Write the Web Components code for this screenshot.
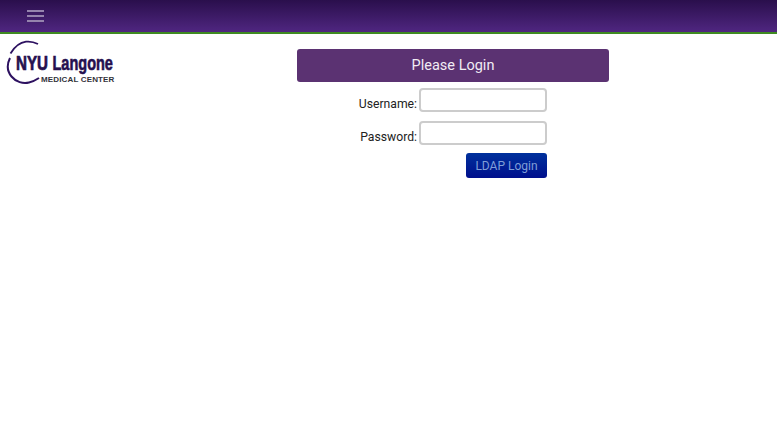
<!DOCTYPE html>
<html><head><meta charset="utf-8"><title>Login</title>
<style>html,body{margin:0;padding:0;background:#fff;height:100%;overflow:hidden}body{font-family:Roboto,sans-serif}</style>
</head><body>
<app-shell></app-shell>
<script>
class AppHeader extends HTMLElement{constructor(){super();this.attachShadow({mode:'open'}).innerHTML=`<style>
:host{display:flex;align-items:center;box-sizing:border-box;height:34px;padding:0 0 0 27px;background:linear-gradient(#2a0f4c,#4f2680);border-bottom:2px solid #3f8a22}
.b{display:flex;flex-direction:column;gap:3px;width:17px}
.b i{display:block;height:2px;background:#9583ad}
</style><div class="b"><i></i><i></i><i></i></div>`}}
customElements.define('app-header',AppHeader);
class NyuLogo extends HTMLElement{constructor(){super();this.attachShadow({mode:'open'}).innerHTML=`<style>
:host{display:block;width:125px;height:46px}svg{display:block}
</style><svg width="125" height="46" viewBox="0 0 125 46">
<path d="M4.5 13.5C9 6 14 2.5 20 1.7C24 1.2 28 2 32 4" fill="none" stroke="#2d1160" stroke-width="1.8"/>
<path d="M4 18C1 24 1 31 5.5 36.5C10 42 17 44 23 42.5C27 41.5 30 40 33 38" fill="none" stroke="#2d1160" stroke-width="2"/>
<text transform="translate(10 30) scale(.777 1)" font-family="Liberation Sans" font-weight="700" font-size="19.5" fill="#25104f" stroke="#25104f" stroke-width=".7">NYU</text>
<text transform="translate(46.5 30) scale(.744 1)" font-family="Liberation Sans" font-weight="700" font-size="19.5" fill="#25104f" stroke="#25104f" stroke-width=".6">Langone</text>
<text x="35" y="41.5" font-family="Liberation Sans" font-weight="700" font-size="8" letter-spacing=".15" fill="#33333b">MEDICAL CENTER</text>
</svg>`}}
customElements.define('nyu-logo',NyuLogo);
class LoginRow extends HTMLElement{constructor(){super();this.attachShadow({mode:'open'}).innerHTML=`<style>
:host{display:flex;justify-content:flex-end;align-items:center;gap:2px;font-size:12.2px;color:#222}
label{padding-top:8px;line-height:16px}
input{box-sizing:border-box;width:128px;height:24px;margin:0;border:2px solid #ccc;border-radius:4px;background:#fff;outline:none}
</style><label>${this.getAttribute('label')}</label><input type="${this.getAttribute('type')||'text'}">`}}
customElements.define('login-row',LoginRow);
class LoginPanel extends HTMLElement{constructor(){super();this.attachShadow({mode:'open'}).innerHTML=`<style>
:host{display:block;width:312px;font-family:Roboto,sans-serif}
h1{margin:0 0 6px;height:33px;line-height:34px;background:#5b3272;border-radius:3px;color:#f1ecf4;font-size:14.5px;font-weight:400;text-align:center}
.f{display:flex;flex-direction:column;gap:9px;width:250px}
.a{display:flex;justify-content:flex-end;margin-top:-1px}
button{box-sizing:border-box;width:81px;height:25px;border:0;border-radius:3px;background:linear-gradient(#00319c,#000f8c);color:#7f9ed8;font:12px Roboto,sans-serif;padding:0}
</style><h1>Please Login</h1><div class="f"><login-row label="Username:"></login-row><login-row label="Password:" type="password"></login-row><div class="a"><button>LDAP Login</button></div></div>`}}
customElements.define('login-panel',LoginPanel);
class AppShell extends HTMLElement{constructor(){super();this.attachShadow({mode:'open'}).innerHTML=`<style>
:host{display:block}
.m{display:grid;grid-template-columns:297px 312px;}
.l{padding:6px 0 0 6px}
.r{padding-top:15px}
</style><app-header></app-header><div class="m"><div class="l"><nyu-logo></nyu-logo></div><div class="r"><login-panel></login-panel></div></div>`}}
customElements.define('app-shell',AppShell);
</script>
</body></html>
